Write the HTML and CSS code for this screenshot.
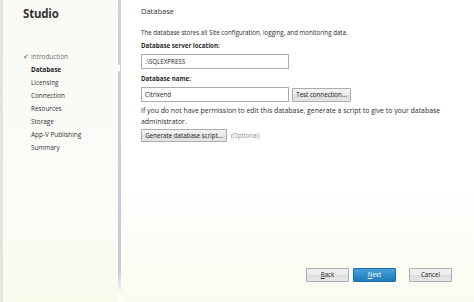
FILE: index.html
```html
<!DOCTYPE html>
<html lang="en">
<head>
  <meta charset="UTF-8" />
  <meta name="viewport" content="width=device-width, initial-scale=1.0" />
  <link rel="stylesheet" href="styles.css">
</head>
<body>
  <div class="window">
    <div class="sidebar">
      <div class="brand">Studio</div>
      <ul class="steps">
        <li class="done"><span class="tick">&#10004;</span>Introduction</li>
        <li class="current">Database</li>
        <li>Licensing</li>
        <li>Connection</li>
        <li>Resources</li>
        <li>Storage</li>
        <li>App-V Publishing</li>
        <li>Summary</li>
      </ul>
    </div>
    <div class="divider"><span class="notch"></span></div>
    <div class="main">
      <div class="page-title">Database</div>
      <p class="intro">The database stores all Site configuration, logging, and monitoring data.</p>

      <label class="field-label first" for="server">Database server location:</label>
      <div class="row">
        <input type="text" id="server" class="textbox" value=".\SQLEXPRESS" />
      </div>

      <label class="field-label" for="dbname">Database name:</label>
      <div class="row">
        <input type="text" id="dbname" class="textbox" value="Citrixend" />
        <button type="button" class="btn btn-test">Test connection...</button>
      </div>

      <p class="note">If you do not have permission to edit this database, generate a script to give to your database administrator.</p>

      <div class="row script-row">
        <button type="button" class="btn btn-script">Generate database script...</button>
        <span class="optional">(Optional)</span>
      </div>

      <div class="footer">
        <button type="button" class="btn btn-nav"><u>B</u>ack</button>
        <button type="button" class="btn btn-nav btn-primary"><u>N</u>ext</button>
        <button type="button" class="btn btn-nav btn-cancel">Cancel</button>
      </div>
    </div>
  </div>
</body>
</html>
```

FILE: styles.css
```css
html, body {
  margin: 0;
  padding: 0;
}

body {
  font-family: "Open Sans", "Liberation Sans", sans-serif;
  font-size: 6.2px;
  color: #2b2b2b;
  background: #fff;
}

.window {
  display: flex;
  width: 474px;
  height: 302px;
  overflow: hidden;
}

.sidebar {
  width: 118px;
  flex: none;
  border-left: 3px solid #e3e6df;
  background: linear-gradient(to bottom, #f9faf6 0%, #fbfcf8 70%, #f7fbec 100%);
  box-sizing: border-box;
  padding-left: 20px;
}

.brand {
  font-size: 11.5px;
  letter-spacing: -0.2px;
  font-weight: bold;
  color: #333;
  margin-top: 5px;
  line-height: 18px;
}

.steps {
  list-style: none;
  margin: 27px 0 0;
  padding: 0;
}

.steps li {
  font-size: 6.4px;
  line-height: 13px;
  height: 13px;
  padding-left: 8px;
  color: #333;
  position: relative;
  white-space: nowrap;
}

.steps li.done {
  color: #6d6d6d;
}

.steps .tick {
  position: absolute;
  left: 0;
  color: #8a8a8a;
  font-size: 6.5px;
}

.steps li.current {
  font-weight: bold;
  color: #1e1e1e;
}

.divider {
  width: 3px;
  flex: none;
  position: relative;
  background: linear-gradient(to bottom, #cdd0d9 0%, #c6cad5 90%, rgba(200, 204, 214, 0) 98%);
  box-shadow: -9px 0 10px -5px rgba(180, 186, 200, 0.35);
}

.notch {
  position: absolute;
  top: 64px;
  left: -3px;
  width: 0;
  height: 0;
  border-top: 4px solid transparent;
  border-bottom: 4px solid transparent;
  border-right: 5px solid #fff;
}

.main {
  flex: 1;
  display: flex;
  flex-direction: column;
  padding-left: 20px;
  background: linear-gradient(to bottom, #ffffff 0%, #ffffff 60%, #fafcf1 100%);
}

.page-title {
  font-size: 7.5px;
  color: #333;
  margin-top: 5px;
  line-height: 12px;
}

.intro {
  margin: 11px 0 0;
  line-height: 10px;
}

.field-label {
  display: block;
  font-weight: bold;
  line-height: 10px;
  margin-top: 5px;
}

.field-label.first {
  margin-top: 3px;
}

.row {
  display: flex;
  align-items: center;
  margin-top: 3px;
}

.textbox {
  width: 148px;
  height: 15px;
  box-sizing: border-box;
  border: 1px solid #a9acb4;
  background: #fff;
  font: inherit;
  color: #222;
  padding: 0 3px;
  margin: 0;
}

.btn {
  font: inherit;
  color: #222;
  height: 14px;
  box-sizing: border-box;
  border: 1px solid #acacac;
  border-radius: 1px;
  background: linear-gradient(to bottom, #f3f3f3 0%, #ebebeb 50%, #dddddd 51%, #e6e6e6 100%);
  padding: 0;
  margin: 0;
  line-height: 12px;
  white-space: nowrap;
  text-align: center;
}

.btn-test {
  width: 59px;
  margin-left: 3px;
}

.note {
  font-size: 6.9px;
  margin: 3px 0 0;
  line-height: 11px;
  width: 312px;
}

.script-row {
  margin-top: 2px;
}

.btn-script {
  width: 86px;
  height: 13px;
  line-height: 11px;
}

.optional {
  color: #8c8c8c;
  margin-left: 4px;
}

.footer {
  margin-top: auto;
  margin-bottom: 20px;
  display: flex;
  padding-left: 165px;
}

.btn-nav {
  width: 43px;
  height: 14px;
  margin-right: 4px;
}

.btn-primary {
  background: linear-gradient(to bottom, #4ba3d8 0%, #2f8dc9 50%, #1f7cbc 100%);
  border-color: #1d6aa0;
  color: #fff;
}

.btn-cancel {
  margin-left: 9px;
}
```
